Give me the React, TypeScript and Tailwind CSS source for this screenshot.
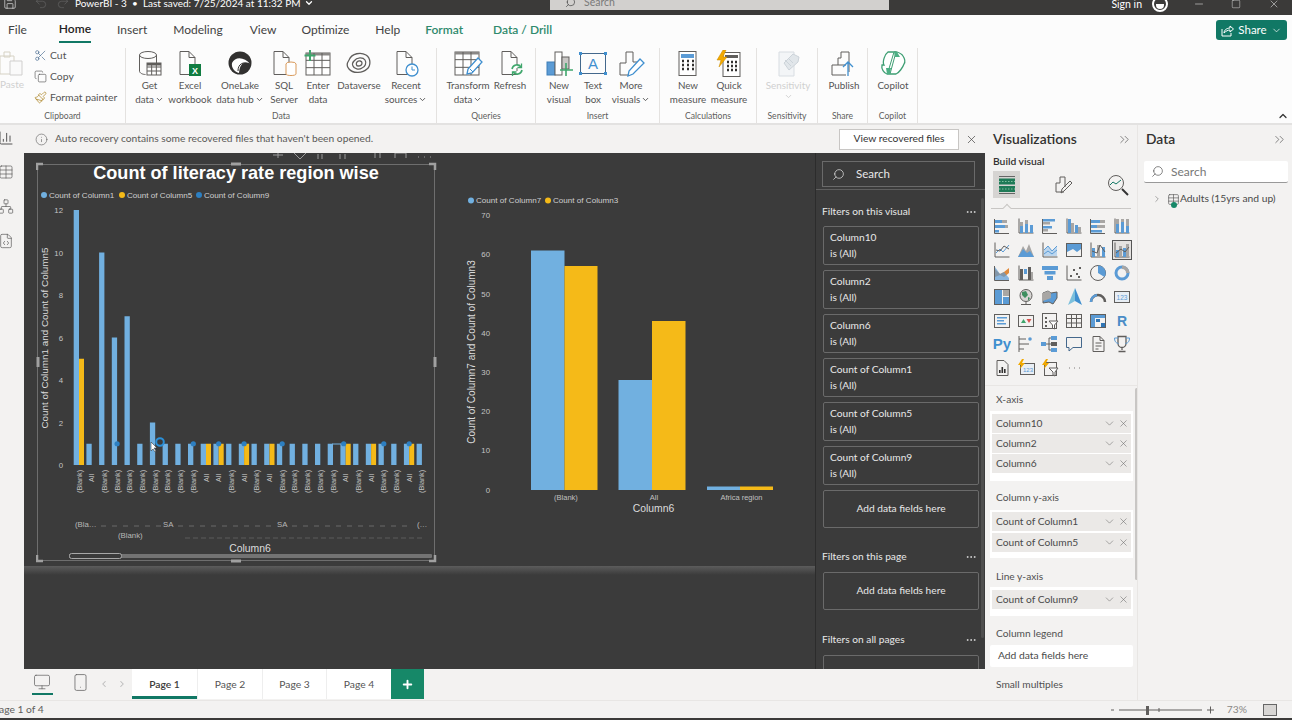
import type { ReactNode } from 'react';
import {
  X, ChevronDown, ChevronRight, ChevronUp, ChevronsRight, ChevronLeft, Search, Info, Plus, Scissors, Copy, Paintbrush,
  Save, Undo2, Redo2, Minus, Square, Monitor, Smartphone, MoreHorizontal, BarChart3, Table, Network, FileCode,
} from 'lucide-react';

const dk = '#605e5c';
const bl = '#5b9bd5';
const gr = '#a8a6a4';
const tl = '#117865';

const Ico = ({ children }: { children: ReactNode }) => (
  <svg width="30" height="28" viewBox="0 0 30 28" fill="none" stroke={dk} strokeWidth="1">{children}</svg>
);

const grid = (x: number, y: number, w: number, h: number, cx: number, cy: number, head = '#605e5c') => (
  <>
    <rect x={x} y={y} width={w} height={h} fill="#fff" />
    <rect x={x} y={y} width={w} height={2.5} fill={head} stroke="none" />
    {Array.from({ length: cx - 1 }, (_, i) => (
      <path key={'a' + i} d={`M${x + ((i + 1) * w) / cx} ${y}v${h}`} />
    ))}
    {Array.from({ length: cy - 1 }, (_, i) => (
      <path key={'b' + i} d={`M${x} ${y + ((i + 1) * h) / cy}h${w}`} />
    ))}
  </>
);

const ribbonIcons: Record<string, ReactNode> = {
  getdata: (
    <Ico>
      <ellipse cx="13" cy="5" rx="8.5" ry="3.5" />
      <path d="M4.5 5v16c0 2 3 3.500 6 3.500M21.500 5v8" />
      {grid(12, 13, 14, 12, 3, 3)}
    </Ico>
  ),
  excel: (
    <Ico>
      <path d="M5 1.500h9l6 6v17H5zM14 1.500v6h6" />
      <rect x="14" y="14" width="12" height="12" fill="#107c41" stroke="none" />
      <text x="20" y="23.500" fontSize="9" fontWeight="700" textAnchor="middle" fill="#fff" stroke="none" fontFamily="Liberation Sans">X</text>
    </Ico>
  ),
  onelake: (
    <Ico>
      <circle cx="15" cy="13" r="11.500" fill="#323130" stroke="none" />
      <path d="M7 13c3-7 13-6 18 1-6-3-10-1-11 9-4-1-8-5-7-10z" fill="#fff" stroke="none" />
      <path d="M13 21c0-7 5-10 12-7" stroke="#323130" />
    </Ico>
  ),
  sql: (
    <Ico>
      <path d="M5 1.500h9l6 6v17H5zM14 1.500v6h6" />
      <ellipse cx="22" cy="14" rx="5" ry="2" fill="#fff" stroke="#d99a5b" />
      <path d="M17 14v10c0 2 10 2 10 0V14" fill="#fff" stroke="#d99a5b" />
    </Ico>
  ),
  enter: (
    <Ico>
      {grid(3, 3, 24, 22, 3, 3, '#8a8886')}
      <path d="M7 0v11M1.500 5.500h11" stroke="#3fa66c" strokeWidth="2" />
    </Ico>
  ),
  dataverse: (
    <Ico>
      <path d="M5 10c3-7 12-8 17-5 5 3 5 11 1 14-4 4-14 5-18 0-3-3-2-6 0-9z" strokeWidth="1.300" />
      <path d="M10 11c3-4 9-4 11-1 2 3 0 7-3 8-3 2-8 1-9-2-1-2 0-4 1-5z" strokeWidth="1.300" />
      <path d="M13 12c2-2 5-1 5 1s-2 3-4 3-2-3-1-4z" strokeWidth="1.300" />
    </Ico>
  ),
  recent: (
    <Ico>
      <path d="M6 1.500h9l6 6v17H6zM15 1.500v6h6" />
      <circle cx="21" cy="20" r="6" fill="#fff" stroke="#3f8fcf" strokeWidth="1.300" />
      <path d="M21 16.500V20h3" stroke="#3f8fcf" />
    </Ico>
  ),
  transform: (
    <Ico>
      {grid(2, 2, 24, 23, 3, 3, '#8a8886')}
      <path d="M14 24l1-5L25 8l4 4-10 11z" fill="#fff" stroke="#3f8fcf" strokeWidth="1.300" />
      <path d="M17 19l3 3" stroke="#3f8fcf" />
    </Ico>
  ),
  refresh: (
    <Ico>
      <path d="M7 1.500h9l6 6v17H7zM16 1.500v6h6" />
      <path d="M17 19a5 5 0 0 1 9-2M27 20a5 5 0 0 1-9 2" stroke="#3fa66c" strokeWidth="1.600" fill="#fff" />
      <path d="M26.500 13.500v4h-4M17.500 26v-4h4" stroke="#3fa66c" strokeWidth="1.300" />
    </Ico>
  ),
  newvisual: (
    <Ico>
      <rect x="3" y="12" width="8" height="13" fill={bl} stroke="#3f7fb8" />
      <rect x="11" y="2" width="7" height="23" fill="#fff" />
      <rect x="18" y="7" width="7" height="12" fill="#c8c6c4" />
      <path d="M22 13v13M16 20h13" stroke="#3fa66c" strokeWidth="1.600" />
    </Ico>
  ),
  textbox: (
    <Ico>
      <rect x="2.500" y="3.500" width="25" height="20" stroke="#44688c" />
      <text x="15" y="19" fontSize="15" textAnchor="middle" fill="#3f8fcf" stroke="none" fontFamily="Liberation Sans">A</text>
      <path d="M1 2h3v3H1zM26 2h3v3h-3zM1 22h3v3H1zM26 22h3v3h-3z" fill="#3f8fcf" stroke="none" />
    </Ico>
  ),
  morevisuals: (
    <Ico>
      <path d="M4 25V13h6V2h7v10h6v3M4 25h9" />
      <path d="M12 26l1-5L24 9l4 4-11 11z" fill="#fff" stroke="#3f8fcf" strokeWidth="1.300" />
    </Ico>
  ),
  newmeasure: (
    <Ico>
      <rect x="6" y="1.500" width="17" height="24" fill="#fff" />
      <rect x="8" y="4" width="13" height="4" fill={bl} stroke="none" />
      <path d="M9 11h2M14 11h2M19 11h2M9 15h2M14 15h2M19 15h2M9 19h2M14 19h2M19 19h2" stroke="#323130" strokeWidth="2.400" />
    </Ico>
  ),
  quickmeasure: (
    <Ico>
      <rect x="9" y="2.500" width="17" height="24" fill="#fff" />
      <rect x="11" y="5" width="13" height="3" fill="#605e5c" stroke="none" />
      <path d="M13 12h2M17 12h2M21 12h2M13 16h2M17 16h2M21 16h2M13 20h2M17 20h2M21 20h2" stroke="#323130" strokeWidth="2.400" />
      <path d="M9 0l-6 10h4l-2 7 8-10H9l3-7z" fill="#f2a900" stroke="#c98a00" strokeWidth=".5" />
    </Ico>
  ),
  sensitivity: (
    <Ico>
      <path d="M6 2h15v24H6z" stroke="#d8dde2" fill="#f3f5f7" />
      <path d="M11 13l9-9 6 3-1 5-9 8z" fill="#e1e6ea" stroke="#ccd3d9" />
      <path d="M12 10l6 6M15 8l5 5" stroke="#ccd3d9" />
    </Ico>
  ),
  publish: (
    <Ico>
      <path d="M3 25V15h6V8h3V2h8v20M3 25h14" />
      <path d="M9 15h8" />
      <path d="M19 26V12M14 17l5-5 5 5" stroke="#3f8fcf" strokeWidth="1.300" />
    </Ico>
  ),
  copilot: (
    <Ico>
      <path d="M6 15C4 12 7 4 10 2h9c3 1 5 2 6 4 2 3 3 5 1 8-1 3-5 9-8 10h-9c-3-1-6-5-5-9z" fill="#fff" stroke="#3e9e73" strokeWidth="1.300" />
      <path d="M12 24l6-22h-2l-6 20z" fill="#fff" stroke="#3e9e73" />
      <path d="M16 2h3l3 5h-5zM8 18h5l-1 6H9z" fill="#4caf84" stroke="none" />
    </Ico>
  ),
  paste: (
    <Ico>
      <path d="M2 7h14v18H2z" stroke="#d6d2c4" />
      <path d="M6 3h6v5H6z" stroke="#d6d2c4" />
      <path d="M12 12h12v14H12z" fill="#fafafa" stroke="#d0cfce" />
    </Ico>
  ),
};

const v = (...n: ReactNode[]) => <>{n}</>;
const R = (x: number, y: number, w: number, h: number, f: string = bl, k: number | string = `${x}${y}${w}`) => (
  <rect key={k} x={x} y={y} width={w} height={h} fill={f} stroke="none" />
);
const ax = <path key="ax" d="M2 1.500v14.500h14.500" />;
const ay = <path key="ay" d="M1.500 2v14.500H16" />;

const vizIcons: ReactNode[] = [
  v(ay, R(2, 3, 7, 3), R(9, 3, 5, 3, gr), R(2, 8, 10, 3), R(12, 8, 3, 3, gr), R(2, 13, 4, 2.500)),
  v(ax, R(3, 9, 3, 7), R(3, 5, 3, 4, gr), R(8, 7, 3, 9), R(8, 3, 3, 4, gr), R(13, 8, 3, 8)),
  v(ay, R(2, 2, 12, 2.500), R(2, 5, 7, 2.500, gr), R(2, 9, 9, 2.500), R(2, 12, 5, 2.500, gr)),
  v(ax, R(3, 2, 3, 14), R(6, 6, 3, 10, gr), R(10, 8, 3, 8), R(13, 10, 3, 6, gr)),
  v(ay, R(2, 3, 9, 3), R(11, 3, 5, 3, gr), R(2, 8, 6, 3), R(8, 8, 8, 3, gr), R(2, 13, 11, 2.500)),
  v(ax, R(3, 7, 3, 9), R(3, 2, 3, 5, gr), R(8, 5, 3, 11), R(8, 2, 3, 3, gr), R(13, 9, 3, 7), R(13, 2, 3, 7, gr)),
  v(ax, <path key="l" d="M3 12l4-4 3 3 6-7" stroke={bl} />, <path key="m" d="M3 9l4 1 4-5 5 3" stroke={dk} />),
  v(<path key="a" d="M1 16L6 5l3 5 3-7 5 13z" fill={gr} stroke="none" />, <path key="b" d="M1 16l5-8 4 4 3-2 4 6z" fill={bl} stroke="none" />),
  v(ax, <path key="a" d="M3 9l4-4 4 5 5-5v10H3z" fill="#bcd6ee" stroke="none" />, <path key="b" d="M3 9l4-4 4 5 5-5M3 13l4-3 4 3 5-4" stroke={bl} />),
  v(<rect key="a" x="1.500" y="2.500" width="15" height="13" />, <path key="b" d="M2 3h14v5l-4 3-4-3-6 3z" fill={bl} stroke="none" />),
  v(ax, R(3, 7, 3, 9), R(8, 4, 3, 12, gr), R(13, 6, 3, 10), <path key="l" d="M3 10l5 2 3-8 5 7" stroke={dk} />),
  v(ax, R(3, 9, 3, 7), R(6, 5, 3, 11, gr), R(10, 7, 3, 9), R(13, 3, 3, 13, gr), <path key="l" d="M3 12l5-4 4 3 4-5" stroke={dk} />),
  v(ay, <path key="a" d="M2 5l5 5 4-2 5-4v5l-5 4-4-2-5 2z" fill="#e08a3c" stroke="none" />, <path key="b" d="M2 3l5 7 4-2 5 6v2H2z" fill={bl} opacity=".7" stroke="none" />),
  v(ax, R(3, 5, 3, 11, dk), R(7, 5, 3, 5, bl), R(11, 3, 3, 13, dk), R(14, 8, 2, 8, gr)),
  v(R(1, 2, 16, 4), R(3.500, 7, 11, 3.500), R(6, 12, 6, 4)),
  v(ax, R(5, 11, 2, 2, dk), R(8, 5, 2, 2, dk), R(11, 9, 2, 2, dk), R(14, 3, 2, 2, dk), R(13, 12, 2, 2, dk)),
  v(<circle key="a" cx="9" cy="9" r="7.500" />, <path key="b" d="M9 9V1.500A7.500 7.500 0 0 1 15.500 13z" fill={bl} stroke="none" />),
  v(<circle key="a" cx="9" cy="9" r="6" stroke={bl} strokeWidth="3" />, <path key="b" d="M9 1.500a7.500 7.500 0 0 1 7.500 7.500h-3.500A4 4 0 0 0 9 5z" fill={gr} stroke="none" />),
  v(<rect key="a" x="1.500" y="1.500" width="15" height="15" />, R(2, 2, 7, 14), R(10, 2, 6, 6, gr), R(10, 9, 6, 7)),
  v(<circle key="a" cx="9" cy="7.500" r="6" fill="#d8d6d4" />, <path key="b" d="M5 4l4-1 2 4-3 3-3-3zM11 9l2 1-2 3z" fill="#3e8f5f" stroke="none" />, <path key="c" d="M4 16.500h10M9 14v2" />),
  v(<path key="a" d="M2 5l5-2 3 2 6-1v6l-4 6-4-2-6 1z" fill={bl} stroke={dk} />, <path key="b" d="M2 5l5-2 3 2v5l-8 3z" fill={gr} stroke="none" />),
  v(<path key="a" d="M10 0l7 17-7-4z" fill="#3f8fcf" stroke="none" />, <path key="b" d="M10 0L3 17l7-4z" fill="#7cc0dc" stroke="none" />),
  v(<path key="a" d="M2 14a7 7 0 0 1 14 0" stroke={dk} strokeWidth="2.500" />, <path key="b" d="M2 14a7 7 0 0 1 6-7" stroke={bl} strokeWidth="2.500" />),
  v(<rect key="a" x="1.500" y="3.500" width="15" height="11" fill="#e8eef4" />, <text key="b" x="9" y="12" fontSize="6.500" textAnchor="middle" fill={bl} stroke="none" fontFamily="Liberation Sans">123</text>),
  v(<rect key="a" x="1.500" y="2.500" width="15" height="13" />, R(4, 5, 10, 1.500), R(4, 8, 7, 1.500), R(4, 11, 9, 1.500)),
  v(<rect key="a" x="1.500" y="3.500" width="15" height="11" />, <path key="b" d="M4 11l2.500-4L9 11z" fill="#3fa66c" stroke="none" />, <path key="c" d="M9.500 7h5L12 11z" fill="#d9534f" stroke="none" />),
  v(<rect key="a" x="1.500" y="1.500" width="14" height="15" />, R(4, 5, 2, 2, dk), R(4, 9, 2, 2, dk), R(4, 13, 2, 2, dk), <path key="b" d="M8 9h9l-3.500 4v4l-2-1v-3z" fill="#fff" stroke={dk} />),
  v(<rect key="a" x="1.500" y="2.500" width="15" height="13" />, <path key="b" d="M1.500 6.500h15M1.500 11h15M6.500 2.500v13M11.500 2.500v13" />),
  v(<rect key="a" x="1.500" y="2.500" width="15" height="13" />, R(2, 3, 14, 3), R(2, 3, 4, 12), R(7, 7, 4, 3, '#2f75b5'), R(12, 11, 4, 4, '#2f75b5')),
  v(<text key="a" x="9" y="14" fontSize="14" fontWeight="700" textAnchor="middle" fill="#4a8cc7" stroke="none" fontFamily="Liberation Sans">R</text>),
  v(<text key="a" x="9" y="14" fontSize="15" fontWeight="700" textAnchor="middle" fill="#3f8fcf" stroke="none" fontFamily="Liberation Sans">Py</text>),
  v(<path key="a" d="M2 1v16M2 4h7M2 9h10M2 14h5" />, <circle key="b" cx="13" cy="4" r="1.800" fill={bl} stroke="none" />),
  v(R(0, 7, 5, 4), R(10, 1, 6, 4), R(10, 7, 6, 4, dk), R(10, 13, 6, 4), <path key="a" d="M5 9h5M8 3v12M8 3h2M8 15h2" />),
  v(<path key="a" d="M1.500 2.500h15v10H8l-4 3.500v-3.500H1.500z" stroke="#44688c" />),
  v(<path key="a" d="M4 1.500h7l4 4v11H4zM11 1.500v4h4M6.500 8h6M6.500 11h6M6.500 14h3" />),
  v(<path key="a" d="M5 1.500h8v7a4 4 0 0 1-8 0zM9 12.500v2.500M5.500 16.500h7" strokeWidth="1.300" />, <path key="b" d="M5 3H1.500c0 3 1 5 4 5.500M13 3h3.500c0 3-1 5-4 5.500" stroke={bl} />),
  v(<path key="a" d="M4 1.500h7l4 4v11H4z" />, R(6, 11, 1.600, 3, '#323130'), R(8.500, 8, 1.600, 6, '#323130'), R(11, 10, 1.600, 4, '#323130')),
  v(<rect key="a" x="3.500" y="4.500" width="14" height="11" fill="#e8eef4" />, <text key="b" x="11" y="13" fontSize="6" textAnchor="middle" fill={bl} stroke="none" fontFamily="Liberation Sans">123</text>, <path key="c" d="M5 0L1 6h3L3 10l5-6H5l2-4z" fill="#f2a900" stroke="none" />),
  v(<rect key="a" x="3.500" y="3.500" width="12" height="13" />, <path key="b" d="M8 9h9l-3 4v4l-2-1v-3z" fill="#fff" stroke={dk} />, <path key="c" d="M5 0L1 6h3L3 10l5-6H5l2-4z" fill="#f2a900" stroke="none" />),
  v(<path key="a" d="M4 9h.8M9 9h.8M14 9h.8" strokeWidth="1.200" />),
];

const RBtn = ({ w, icon, a, b, caret, muted }: { w: string; icon: string; a: string; b?: string; caret?: boolean; muted?: boolean }) => (
  <div className={`flex shrink-0 flex-col items-center text-[9.8px] ${w}`}>
    <div className="h-[28px] mt-[2px]">{ribbonIcons[icon]}</div>
    <div className={`whitespace-nowrap text-center leading-[14px] ${muted ? 'text-[#d0d0d0]' : 'text-[#555]'}`}>{a}</div>
    <div className={`flex items-center whitespace-nowrap leading-[14px] ${muted ? 'text-[#d0d0d0]' : 'text-[#555]'}`}>
      {b}
      {caret && <ChevronDown className="ml-[1px] h-[9px] w-[9px]" strokeWidth={2.5} />}
    </div>
  </div>
);

const Group = ({ w, pl, label, children }: { w: string; pl: string; label: string; children: ReactNode }) => (
  <div className={`flex shrink-0 flex-col border-r border-[#e4e2e0] ${w}`}>
    <div className={`flex flex-1 ${pl}`}>{children}</div>
    <div className="text-center text-[8.6px] leading-[14px] text-[#605e5c]">{label}</div>
  </div>
);

const FilterCard = ({ a, b }: { a: string; b: string }) => (
  <div className="ml-[7px] h-[39px] w-[156px] rounded-[2px] border border-[#6a6a6a] pl-[6px] pt-[2px] text-[10.2px] leading-[16px] text-[#e8e8e8]">
    <div>{a}</div>
    <div>{b}</div>
  </div>
);

const AddCard = () => (
  <div className="ml-[7px] flex h-[38px] w-[156px] shrink-0 items-center justify-center rounded-[2px] border border-[#6a6a6a] text-[10.2px] text-[#e8e8e8]">
    Add data fields here
  </div>
);

const FilterTitle = ({ label }: { label: string }) => (
  <div className="flex h-[16px] items-center justify-between pl-[6px] pr-[8px] text-[10.2px] text-[#e8e8e8]">
    <span>{label}</span>
    <MoreHorizontal className="h-[12px] w-[12px]" strokeWidth={1.5} />
  </div>
);

const Field = ({ label }: { label: string }) => (
  <div className="mx-[2px] flex h-[19px] items-center justify-between bg-[#ebe9e7] pl-[4px] pr-[2px] text-[10.2px] text-[#4a4a4a]">
    <span>{label}</span>
    <span className="flex items-center gap-[2px] text-[#666]">
      <ChevronDown className="h-[13px] w-[13px]" strokeWidth={1} />
      <X className="h-[11px] w-[11px]" strokeWidth={1.2} />
    </span>
  </div>
);

const FieldLabel = ({ label, mt }: { label: string; mt: string }) => (
  <div className={`h-[16px] pl-[11px] text-[10.2px] leading-[16px] text-[#505050] ${mt}`}>{label}</div>
);

const Chart1 = () => {
  const labels = 'BABBBBBBBBAABABABBBBBABABBAB'.split('');
  const blue = [12, 1, 10, 6, 7, 1, 2, 1, 1, 1, 1, 1, 1, 1, 1, 1, 1, 1, 1, 1, 1, 1, 1, 1, 1, 1, 1, 1];
  const yellow = [0, 10, 11, 13, 15, 21, 23, 26];
  const dots = [3, 9, 11, 13, 16, 21, 24, 26];
  const cx = (i: number) => 79 + 12.7 * i;
  const y = (n: number) => 465 - n * 21.25;
  const handles = [[236, 164], [236, 561], [38, 362], [435, 362]];
  return (
    <svg width="402" height="412" viewBox="36 153 402 412" className="shrink-0 font-['Liberation_Sans',sans-serif]">
      <path d="M278 153v5M273 155h10M294 153l6 6 6-6M318 154v5M322 154v5M340 154v5M345 154v5M375 153v5M380 153v5M395 158v-5h11v5M418 157h1M424 157h1M430 157h1" stroke="#9a9a9a" fill="none" />
      <rect x="37.500" y="164.500" width="397" height="396" fill="none" stroke="#6e6e6e" />
      <path d="M37 170v-6h6M429 164h6v6M37 555v6h6M429 561h6v-6" fill="none" stroke="#a0a0a0" strokeWidth="2.500" />
      {handles.map(([a, b]) => (
        <rect key={`${a}${b}`} x={a === 236 ? a - 5 : a - 1.500} y={a === 236 ? b - 1.500 : b - 5} width={a === 236 ? 10 : 3} height={a === 236 ? 3 : 10} fill="#a0a0a0" />
      ))}
      <text x="236" y="179" fontSize="18.100" fontWeight="700" fill="#fff" textAnchor="middle">Count of literacy rate region wise</text>
      {[[44, bl2, 'Count of Column1'], [122, yl, 'Count of Column5'], [199, dot, 'Count of Column9']].map(([x, c, t]) => (
        <g key={t as string}>
          <circle cx={x as number} cy="195" r="3" fill={c as string} />
          <text x={(x as number) + 5} y="198" fontSize="8.100" fill="#d0d0d0">{t as string}</text>
        </g>
      ))}
      {[0, 2, 4, 6, 8, 10, 12].map((n) => (
        <text key={n} x="63" y={y(n) + 3} fontSize="7.800" textAnchor="end" fill="#c4c4c4">{n}</text>
      ))}
      <text transform="translate(48 338) rotate(-90)" fontSize="9.900" textAnchor="middle" fill="#dcdcdc">Count of Column1 and Count of Column5</text>
      {blue.map((n, i) => (
        <rect key={i} x={cx(i) - 5.300} y={y(n)} width="5.300" height={n * 21.25} fill={bl2} />
      ))}
      {yellow.map((i) => (
        <rect key={i} x={cx(i)} y={i === 0 ? y(5) : y(1)} width="5" height={i === 0 ? 106.250 : 21.25} fill={yl} />
      ))}
      <path d="M332 444h12" stroke={bl2} />
      {dots.map((i) => (
        <circle key={i} cx={cx(i) - (i === 21 ? 2 : 0)} cy={y(1)} r="2.600" fill={dot} />
      ))}
      <circle cx="160" cy="442" r="3.800" fill="none" stroke="#2a8fd8" strokeWidth="2" />
      <path d="M151 442v9l2-2 2 3 1-1-2-3h3z" fill="#fff" stroke="#222" strokeWidth=".5" />
      {labels.map((l, i) => (
        <text key={i} transform={`translate(${cx(i) + 2.500} ${l === 'B' ? 493 : 482}) rotate(-90)`} fontSize="7.300" fill="#c0c0c0">{l === 'B' ? '(Blank)' : 'All'}</text>
      ))}
      <text x="75" y="527" fontSize="7.800" fill="#b8b8b8">(Bla…</text>
      <text x="163" y="527" fontSize="7.800" fill="#b8b8b8">SA</text>
      <text x="277" y="527" fontSize="7.800" fill="#b8b8b8">SA</text>
      <text x="417" y="527" fontSize="7.800" fill="#b8b8b8">(…</text>
      <text x="118" y="538" fontSize="7.800" fill="#b8b8b8">(Blank)</text>
      <path d="M101 526h60M178 526h95M292 526h120" stroke="#777" strokeDasharray="5 6" strokeWidth=".8" />
      <path d="M185 538h240" stroke="#666" strokeDasharray="5 3" strokeWidth=".8" />
      <text x="250" y="552" fontSize="10.400" fill="#dcdcdc" textAnchor="middle">Column6</text>
      <rect x="69" y="554" width="363" height="4" rx="1" fill="#737373" />
      <rect x="69.500" y="553.500" width="52" height="5" rx="2" fill="#3b3b3b" stroke="#a8a8a8" />
    </svg>
  );
};

const bl2 = '#71b0e0';
const yl = '#f5ba18';
const dot = '#2d7fc1';

const Chart2 = () => {
  const y = (n: number) => 489.500 - n * 3.92;
  return (
    <svg width="330" height="330" viewBox="460 190 330 330" className="ml-[22px] mt-[37px] shrink-0 font-['Liberation_Sans',sans-serif]">
      <circle cx="471" cy="200.500" r="3" fill={bl2} />
      <text x="476" y="203" fontSize="8.100" fill="#d0d0d0">Count of Column7</text>
      <circle cx="548" cy="200.500" r="3" fill={yl} />
      <text x="553" y="203" fontSize="8.100" fill="#d0d0d0">Count of Column3</text>
      {[0, 10, 20, 30, 40, 50, 60, 70].map((n) => (
        <text key={n} x="490" y={y(n) + 3} fontSize="7.800" textAnchor="end" fill="#c4c4c4">{n}</text>
      ))}
      <text transform="translate(475 352) rotate(-90)" fontSize="10" textAnchor="middle" fill="#dcdcdc">Count of Column7 and Count of Column3</text>
      <rect x="531" y="250.500" width="33.500" height="239.500" fill={bl2} />
      <rect x="564.500" y="266" width="33" height="224" fill={yl} />
      <rect x="618.500" y="380" width="33.500" height="110" fill={bl2} />
      <rect x="652" y="321" width="33.500" height="169" fill={yl} />
      <rect x="707" y="486.500" width="33" height="3.500" fill={bl2} />
      <rect x="740" y="486.500" width="33" height="3.500" fill={yl} />
      <text x="566" y="500" fontSize="7.500" textAnchor="middle" fill="#c0c0c0">(Blank)</text>
      <text x="654" y="500" fontSize="7.500" textAnchor="middle" fill="#c0c0c0">All</text>
      <text x="741.500" y="500" fontSize="7.500" textAnchor="middle" fill="#c0c0c0">Africa region</text>
      <text x="653.500" y="512" fontSize="10.400" textAnchor="middle" fill="#dcdcdc">Column6</text>
    </svg>
  );
};

export default function App() {
  const tabs = [
    ['File', 'ml-[8px] mr-[32px] text-[#424242]'],
    ['Home', 'mr-[26px] font-semibold text-[#252423] border-b-2 border-[#117865]'],
    ['Insert', 'mr-[26px] text-[#424242]'],
    ['Modeling', 'mr-[27px] text-[#424242]'],
    ['View', 'mr-[25px] text-[#424242]'],
    ['Optimize', 'mr-[26px] text-[#424242]'],
    ['Help', 'mr-[25px] text-[#424242]'],
    ['Format', 'mr-[30px] font-semibold text-[#2f8a6d]'],
    ['Data / Drill', 'font-semibold text-[#2f8a6d]'],
  ];
  return (
    <div className="flex h-[720px] w-[1292px] flex-col overflow-hidden bg-[#f3f2f1] font-['Lato',sans-serif] text-[10.3px]">
      {/* Title bar */}
      <div className="flex h-[15px] shrink-0 items-start overflow-hidden bg-[#3b3a39] text-[10px] text-white">
        <div className="-mt-[4px] flex items-center pl-[3px]">
          <Save className="h-[14px] w-[14px]" strokeWidth={1} />
          <Undo2 className="ml-[17px] h-[14px] w-[14px] text-[#6b6b6b]" strokeWidth={1} />
          <Redo2 className="ml-[8px] h-[14px] w-[14px] text-[#6b6b6b]" strokeWidth={1} />
          <span className="ml-[5px] whitespace-nowrap leading-[14px]">PowerBI - 3 &nbsp;•&nbsp; Last saved: 7/25/2024 at 11:32 PM</span>
          <ChevronDown className="ml-[4px] h-[10px] w-[10px]" strokeWidth={3} />
        </div>
        <div className="absolute left-[550px] top-0 flex h-[10px] w-[339px] items-center overflow-hidden bg-[#d2d0ce] pl-[15px] text-[10.5px] text-[#7a7a7a]">
          <Search className="-mt-[6px] h-[11px] w-[11px] -scale-x-100 text-[#444]" strokeWidth={1.5} />
          <span className="-mt-[6px] ml-[8px] leading-[14px]">Search</span>
        </div>
        <div className="ml-auto -mt-[4px] flex items-center pr-[12px]">
          <span className="text-[10.5px] leading-[14px]">Sign in</span>
          <span className="ml-[10px] flex h-[16px] w-[16px] items-end justify-center rounded-full border-[2px] border-white">
            <span className="mb-[1px] h-[5px] w-[8px] rounded-b-full bg-white" />
          </span>
          <Minus className="ml-[25px] h-[12px] w-[12px]" strokeWidth={1} />
          <Square className="ml-[26px] h-[10px] w-[10px]" strokeWidth={1} />
          <X className="ml-[27px] h-[12px] w-[12px]" strokeWidth={1} />
        </div>
      </div>

      {/* Tabs */}
      <div className="flex h-[30px] shrink-0 items-center bg-[#fcfcfc] text-[12px]">
        {tabs.map(([t, c]) => (
          <span key={t} className={`flex h-[26px] items-center whitespace-nowrap ${c}`}>{t}</span>
        ))}
        <div className="ml-auto mr-[5px] flex h-[20px] w-[71px] items-center justify-center gap-[4px] rounded-[3px] bg-[#117865] text-[11.5px] text-white">
          <svg width="13" height="13" viewBox="0 0 13 13" fill="none" stroke="#fff">
            <path d="M1 5v7h9V9M3 9c0-3 3-5 6-5V2l3.500 3L9 8V6C7 6 5 7 3 9z" />
          </svg>
          Share
          <ChevronDown className="h-[11px] w-[11px]" strokeWidth={1.5} />
        </div>
      </div>

      {/* Ribbon */}
      <div className="flex h-[78px] shrink-0 bg-[#fcfcfc] pt-[3px]">
        <Group w="w-[126px]" pl="pl-0" label="Clipboard">
          <div className="w-[28px]">
            <div className="-ml-[2px] mt-[1px]">{ribbonIcons.paste}</div>
            <div className="text-[10px] leading-[14px] text-[#d0d0d0]">Paste</div>
          </div>
          <div className="ml-[6px] flex flex-col gap-[7px] text-[10.4px] text-[#555]">
            <div className="flex h-[14px] items-center gap-[3px] leading-[14px]">
              <Scissors className="h-[13px] w-[13px] text-[#44688c]" strokeWidth={1.2} />
              Cut
            </div>
            <div className="flex h-[14px] items-center gap-[3px] leading-[14px]">
              <Copy className="h-[13px] w-[13px] text-[#555]" strokeWidth={1.2} />
              Copy
            </div>
            <div className="flex h-[14px] items-center gap-[3px] leading-[14px]">
              <Paintbrush className="h-[13px] w-[13px] text-[#b08a2e]" strokeWidth={1.4} />
              Format painter
            </div>
          </div>
        </Group>
        <Group w="w-[311px]" pl="pl-[6px]" label="Data">
          <RBtn w="w-[35px]" icon="getdata" a="Get" b="data" caret />
          <RBtn w="w-[46px]" icon="excel" a="Excel" b="workbook" />
          <RBtn w="w-[54px]" icon="onelake" a="OneLake" b="data hub" caret />
          <RBtn w="w-[34px]" icon="sql" a="SQL" b="Server" />
          <RBtn w="w-[34px]" icon="enter" a="Enter" b="data" />
          <RBtn w="w-[48px]" icon="dataverse" a="Dataverse" />
          <RBtn w="w-[46px]" icon="recent" a="Recent" b="sources" caret />
        </Group>
        <Group w="w-[99px]" pl="pl-[8px]" label="Queries">
          <RBtn w="w-[46px]" icon="transform" a="Transform" b="data" caret />
          <RBtn w="w-[38px]" icon="refresh" a="Refresh" />
        </Group>
        <Group w="w-[124px]" pl="pl-[7px]" label="Insert">
          <RBtn w="w-[32px]" icon="newvisual" a="New" b="visual" />
          <RBtn w="w-[36px]" icon="textbox" a="Text" b="box" />
          <RBtn w="w-[40px]" icon="morevisuals" a="More" b="visuals" caret />
        </Group>
        <Group w="w-[97px]" pl="pl-[7px]" label="Calculations">
          <RBtn w="w-[42px]" icon="newmeasure" a="New" b="measure" />
          <RBtn w="w-[40px]" icon="quickmeasure" a="Quick" b="measure" />
        </Group>
        <Group w="w-[61px]" pl="pl-[10px]" label="Sensitivity">
          <RBtn w="w-[42px]" icon="sensitivity" a="Sensitivity" caret muted />
        </Group>
        <Group w="w-[50px]" pl="pl-[6px]" label="Share">
          <RBtn w="w-[40px]" icon="publish" a="Publish" />
        </Group>
        <Group w="w-[50px]" pl="pl-[4px]" label="Copilot">
          <RBtn w="w-[42px]" icon="copilot" a="Copilot" />
        </Group>
        <div className="ml-auto flex items-end pr-[3px] pb-[1px]">
          <ChevronUp className="h-[12px] w-[12px] text-[#333]" strokeWidth={2.5} />
        </div>
      </div>
      <div className="h-[2px] shrink-0 bg-[#e3e2e1]" />

      {/* Main */}
      <div className="flex h-[575px] shrink-0">
        <div className="flex w-[24px] shrink-0 flex-col gap-[18px] pt-[5px] text-[#555]">
          <BarChart3 className="-ml-[2px] h-[16px] w-[16px]" strokeWidth={1.5} />
          <Table className="-ml-[2px] h-[16px] w-[16px]" strokeWidth={1} />
          <Network className="-ml-[2px] h-[17px] w-[16px]" strokeWidth={1} />
          <FileCode className="-ml-[2px] h-[16px] w-[16px]" strokeWidth={1} />
        </div>

        <div className="flex w-[961px] shrink-0 flex-col">
          <div className="flex h-[28px] shrink-0 items-center pl-[11px] text-[#5b5a58]">
            <Info className="h-[13px] w-[13px] text-[#666]" strokeWidth={1.2} />
            <span className="ml-[7px] text-[10.25px]">Auto recovery contains some recovered files that haven't been opened.</span>
            <div className="ml-auto flex h-[21px] w-[120px] items-center justify-center border border-[#c8c6c4] bg-white text-[#333]">View recovered files</div>
            <X className="mx-[7px] ml-[6px] h-[13px] w-[13px] text-[#444]" strokeWidth={1.3} />
          </div>

          <div className="flex h-[516px] shrink-0">
            <div className="w-[791px] shrink-0 overflow-hidden bg-[#3b3b3b]">
              <div className="flex h-[413px] items-start pl-[12px]">
                <Chart1 />
                <Chart2 />
              </div>
              <div className="h-[9px] bg-gradient-to-b from-[#5c5c5c] to-[#3b3b3b]" />
            </div>

            <div className="relative w-[170px] shrink-0 overflow-hidden border-l border-[#2c2c2c] bg-[#3b3b3b]">
              <div className="h-[37px] border-b border-[#5f5f5f] pt-[8px]">
                <div className="ml-[6px] flex h-[26px] w-[153px] items-center border border-[#6a6a6a] pl-[9px] text-[11.5px] text-[#e8e8e8]">
                  <Search className="h-[13px] w-[13px] -scale-x-100" strokeWidth={1.3} />
                  <span className="ml-[11px]">Search</span>
                </div>
              </div>
              <div className="mt-[14px]"><FilterTitle label="Filters on this visual" /></div>
              <div className="mt-[6px] flex flex-col gap-[5px]">
                <FilterCard a="Column10" b="is (All)" />
                <FilterCard a="Column2" b="is (All)" />
                <FilterCard a="Column6" b="is (All)" />
                <FilterCard a="Count of Column1" b="is (All)" />
                <FilterCard a="Count of Column5" b="is (All)" />
                <FilterCard a="Count of Column9" b="is (All)" />
                <AddCard />
              </div>
              <div className="mt-[21px]"><FilterTitle label="Filters on this page" /></div>
              <div className="mt-[7px]"><AddCard /></div>
              <div className="mt-[22px]"><FilterTitle label="Filters on all pages" /></div>
              <div className="mt-[7px]"><AddCard /></div>
              <div className="absolute left-[165px] top-[45px] h-[440px] w-[3px] rounded-full bg-[#4f4f4f]" />
            </div>
          </div>

          <div className="flex h-[31px] shrink-0 items-start">
            <div className="relative flex h-[30px] w-[108px] shrink-0 items-center pl-[9px] text-[#666]">
              <Monitor className="-mt-[4px] h-[18px] w-[18px]" strokeWidth={1} />
              <Smartphone className="-mt-[3px] ml-[20px] h-[19px] w-[19px]" strokeWidth={1} />
              <ChevronLeft className="ml-[9px] h-[10px] w-[10px] text-[#bbb]" strokeWidth={2.5} />
              <ChevronRight className="ml-[8px] h-[10px] w-[10px] text-[#bbb]" strokeWidth={2.5} />
              <span className="absolute bottom-[4px] left-[8px] h-[2px] w-[21px] bg-[#117865]" />
            </div>
            <div className="flex h-[30px] w-[65px] items-center justify-center border-b-[3px] border-[#117865] bg-white pt-[5px] font-semibold text-[#3b3a39]">Page 1</div>
            <div className="flex h-[30px] w-[65px] items-center justify-center border-l border-[#eee] bg-white pt-[2px] text-[#555]">Page 2</div>
            <div className="flex h-[30px] w-[64px] items-center justify-center border-l border-[#eee] bg-white pt-[2px] text-[#555]">Page 3</div>
            <div className="flex h-[30px] w-[65px] items-center justify-center border-l border-[#eee] bg-white pt-[2px] text-[#555]">Page 4</div>
            <div className="flex h-[30px] w-[33px] items-center justify-center bg-[#168868] text-white">
              <Plus className="h-[13px] w-[13px]" strokeWidth={3.5} />
            </div>
          </div>
        </div>

        {/* Visualizations */}
        <div className="relative w-[153px] shrink-0 overflow-hidden border-r border-[#e8e6e4] text-[#4a4a4a]">
          <div className="flex h-[28px] items-center justify-between pl-[8px] pr-[5px]">
            <span className="text-[13.8px] font-semibold text-[#323130]">Visualizations</span>
            <ChevronsRight className="h-[15px] w-[15px] text-[#444]" strokeWidth={1} />
          </div>
          <div className="h-[16px] pl-[8px] font-semibold leading-[16px] text-[#323130]">Build visual</div>
          <div className="mt-[2px] flex h-[27px] items-center pl-[8px]">
            <div className="flex h-[27px] w-[27px] items-center justify-center bg-[#d6d4d2]">
              <svg width="20" height="20" viewBox="0 0 20 20">
                <path d="M2 1.500h16M2 18.500h16" stroke="#666" />
                <rect x="2" y="3.500" width="16" height="6" fill="#1f7a57" />
                <rect x="2" y="11" width="16" height="6" fill="#1f7a57" />
                <path d="M2 6.500h16M2 14h16" stroke="#7fbf9f" strokeDasharray="1.500 1.500" />
              </svg>
            </div>
            <svg width="20" height="20" viewBox="0 0 20 20" fill="none" stroke={dk} className="ml-[33px]">
              <path d="M3 17V8h4V2h5v10M3 17h8" />
              <path d="M8 18l1-4 8-8 2 2-8 8z" />
            </svg>
            <svg width="22" height="22" viewBox="0 0 22 22" fill="none" stroke={dk} className="ml-[34px]">
              <circle cx="9" cy="9" r="7.500" />
              <path d="M3 11l3-3 3 2 5-4" stroke={tl} />
              <path d="M15 15l6 6" strokeWidth="2" stroke="#333" />
            </svg>
          </div>
          <div className="relative mx-[6px] mt-[10px] h-px bg-[#c8c6c4]">
            <span className="absolute -top-[3px] left-[13px] h-[6px] w-[6px] rotate-45 border-l border-t border-[#c8c6c4] bg-[#f3f2f1]" />
          </div>
          <div className="ml-[5px] mt-[5px] grid w-[144px] grid-cols-6 auto-rows-[23.7px]">
            {vizIcons.map((ic, i) => (
              <div key={i} className="flex items-center justify-center">
                <div className={i === 11 ? 'flex h-[20px] w-[20px] items-center justify-center border border-[#555] bg-[#e4e2e0]' : ''}>
                  <svg width="18" height="18" viewBox="0 0 18 18" fill="none" stroke={dk} className="block">{ic}</svg>
                </div>
              </div>
            ))}
          </div>
          <div className="mt-[5px] h-px bg-[#e8e6e4]" />
          <FieldLabel label="X-axis" mt="mt-[5px]" />
          <div className="ml-[5px] mt-[4px] flex h-[70px] w-[143px] flex-col gap-px bg-white pt-[3px]">
            <Field label="Column10" />
            <Field label="Column2" />
            <Field label="Column6" />
          </div>
          <FieldLabel label="Column y-axis" mt="mt-[8px]" />
          <div className="ml-[5px] mt-[5px] flex h-[48px] w-[143px] flex-col gap-[2px] bg-white pt-[2px]">
            <Field label="Count of Column1" />
            <Field label="Count of Column5" />
          </div>
          <FieldLabel label="Line y-axis" mt="mt-[10px]" />
          <div className="ml-[5px] mt-[3px] flex h-[29px] w-[143px] flex-col bg-white pt-[3px]">
            <Field label="Count of Column9" />
          </div>
          <FieldLabel label="Column legend" mt="mt-[9px]" />
          <div className="ml-[5px] mt-[4px] flex h-[22px] w-[143px] items-center rounded-[2px] bg-white pl-[8px]">Add data fields here</div>
          <FieldLabel label="Small multiples" mt="mt-[9px]" />
          <div className="absolute left-[150px] top-[263px] h-[192px] w-[3px] rounded-full bg-[#c8c6c4]" />
        </div>

        {/* Data */}
        <div className="w-[154px] shrink-0 text-[#4a4a4a]">
          <div className="flex h-[28px] items-center justify-between pl-[8px] pr-[5px]">
            <span className="text-[13.8px] font-semibold text-[#323130]">Data</span>
            <ChevronsRight className="h-[15px] w-[15px] text-[#444]" strokeWidth={1} />
          </div>
          <div className="ml-[6px] mt-[8px] flex h-[22px] w-[144px] items-center rounded-[2px] border-b border-[#999] bg-white pl-[7px] text-[12px] text-[#777]">
            <Search className="h-[13px] w-[13px] -scale-x-100 text-[#555]" strokeWidth={1.3} />
            <span className="ml-[7px]">Search</span>
          </div>
          <div className="mt-[6px] flex h-[20px] items-center pl-[14px]">
            <ChevronRight className="h-[10px] w-[10px] text-[#777]" strokeWidth={1.5} />
            <span className="relative ml-[5px] flex">
              <Table className="h-[13px] w-[13px] text-[#555]" strokeWidth={1.2} />
              <span className="absolute -bottom-[2px] left-[4px] h-[6px] w-[6px] rounded-full bg-[#168868]" />
            </span>
            <span className="whitespace-nowrap">Adults (15yrs and up)</span>
          </div>
        </div>
      </div>

      {/* Status bar */}
      <div className="flex h-[18px] shrink-0 items-center overflow-hidden border-t border-[#e8e6e4] text-[#605e5c]">
        <span className="-ml-[7px] whitespace-nowrap">Page 1 of 4</span>
        <div className="ml-auto flex items-center pr-[15px]">
          <svg width="104" height="12" viewBox="0 0 104 12" stroke="#605e5c" fill="none">
            <path d="M0 6h3M8 6h83M48 4v4M96 6h7M99.500 2.500v7" />
            <rect x="35" y="2" width="3" height="9" fill="#605e5c" stroke="none" />
          </svg>
          <span className="ml-[12px] text-[#8a8886]">73%</span>
          <svg width="14" height="12" viewBox="0 0 14 12" fill="#d8d6d4" stroke="#666" className="ml-[16px]"><rect x=".5" y=".5" width="13" height="11" /></svg>
        </div>
      </div>
      <div className="h-[2px] shrink-0 bg-[#3b3a39]" />
    </div>
  );
}
